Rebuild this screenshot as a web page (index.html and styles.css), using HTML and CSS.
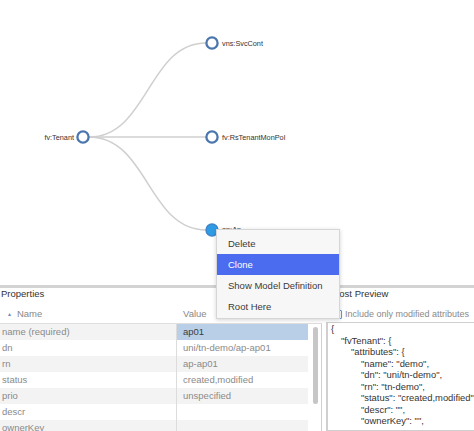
FILE: index.html
```html
<!DOCTYPE html>
<html>
<head>
<meta charset="utf-8">
<link rel="stylesheet" href="styles.css">
</head>
<body>
<div class="graph">
  <svg width="474" height="285" viewBox="0 0 474 285">
    <g class="edges">
      <path d="M89 137 C148 137 148 43 206 43"/>
      <path d="M89 137 L206 137"/>
      <path d="M89 137 C148 137 148 230 206 230"/>
    </g>
    <circle class="node" cx="83" cy="137" r="5.6"/>
    <circle class="node" cx="212" cy="43" r="5.6"/>
    <circle class="node" cx="212" cy="137" r="5.6"/>
    <circle class="node active" cx="212" cy="230" r="6"/>
    <text class="label" x="74" y="139.7" text-anchor="end">fv:Tenant</text>
    <text class="label" x="222" y="45.7">vns:SvcCont</text>
    <text class="label" x="222" y="139.7">fv:RsTenantMonPol</text>
    <text class="label" x="222" y="232.2">ap:Ap</text>
  </svg>
</div>
<div class="splitter"></div>
<div class="panels">
  <div class="props">
    <div class="panel-title">Properties</div>
    <div class="table-head">
      <div class="col-name"><span class="sort">▲</span>Name</div>
      <div class="col-value">Value</div>
    </div>
    <div class="table-body">
      <div class="rows">
        <div class="row"><div class="cell-name">name (required)</div><div class="cell-value selected">ap01</div></div>
        <div class="row"><div class="cell-name">dn</div><div class="cell-value">uni/tn-demo/ap-ap01</div></div>
        <div class="row"><div class="cell-name">rn</div><div class="cell-value">ap-ap01</div></div>
        <div class="row"><div class="cell-name">status</div><div class="cell-value">created,modified</div></div>
        <div class="row"><div class="cell-name">prio</div><div class="cell-value">unspecified</div></div>
        <div class="row"><div class="cell-name">descr</div><div class="cell-value"></div></div>
        <div class="row"><div class="cell-name">ownerKey</div><div class="cell-value"></div></div>
      </div>
      <div class="scrollbar"><div class="thumb"></div></div>
    </div>
  </div>
  <div class="preview">
    <div class="panel-title indent">Post Preview</div>
    <div class="check-row"><span class="checkbox"></span>Include only modified attributes</div>
    <div class="json">
      <div>{</div>
      <div class="i1">"fvTenant": {</div>
      <div class="i2">"attributes": {</div>
      <div class="i3">"name": "demo",</div>
      <div class="i3">"dn": "uni/tn-demo",</div>
      <div class="i3">"rn": "tn-demo",</div>
      <div class="i3">"status": "created,modified"</div>
      <div class="i3">"descr": "",</div>
      <div class="i3">"ownerKey": "",</div>
      <div class="i3">"ownerTag": "",</div>
    </div>
  </div>
</div>
<div class="menu">
  <div class="item">Delete</div>
  <div class="item hover">Clone</div>
  <div class="item">Show Model Definition</div>
  <div class="item">Root Here</div>
</div>
</body>
</html>
```
FILE: styles.css
```css
* { box-sizing: border-box; }
body {
  margin: 0;
  width: 474px;
  height: 431px;
  overflow: hidden;
  position: relative;
  background: #fff;
  font-family: "Liberation Sans", Arial, sans-serif;
}
.graph { height: 285px; }
.graph svg { display: block; }
.edges path { fill: none; stroke: #cfcfcf; stroke-width: 1.5; }
.node { fill: #fff; stroke: #4a76ad; stroke-width: 2.3; }
.node.active { fill: #2f9be5; stroke: #3d85c9; stroke-width: 1.4; }
.label { font-family: "Liberation Sans", Arial, sans-serif; font-size: 7.3px; fill: #333; }

.splitter { height: 3px; background: #d3d3d3; }
.panels { display: flex; height: 143px; }
.props { width: 322px; display: flex; flex-direction: column; }
.panel-title { height: 12px; line-height: 12px; font-size: 9.5px; color: #333; padding-left: 1px; }
.panel-title.indent { padding-left: 7px; }
.table-head {
  display: flex;
  margin-top: 4px;
  height: 20px;
  line-height: 19px;
  border-bottom: 1px solid #dedede;
  font-size: 9.5px;
  color: #888;
}
.col-name { width: 176px; padding-left: 7px; }
.sort { font-size: 5px; color: #6a8cc0; margin-right: 5px; vertical-align: 1px; }
.col-value { padding-left: 7px; }
.table-body { display: flex; flex: 1; border-right: 1px solid #cfcfcf; }
.rows { width: 308px; }
.row { display: flex; height: 16px; line-height: 16px; font-size: 9.5px; color: #8a8a8a; }
.row:nth-child(odd) { background: #f3f3f3; }
.cell-name { width: 176px; padding-left: 2px; }
.cell-value { flex: 1; border-left: 1px solid #dcdcdc; padding-left: 6px; }
.cell-value.selected { background: #b9cfe8; color: #3c3c3c; }
.scrollbar { width: 13px; padding: 3px 0 0 5px; }
.thumb { width: 5px; height: 77px; border-radius: 3px; background: #c6c6c6; }

.preview { flex: 1; margin-left: 4px; display: flex; flex-direction: column; }
.check-row { margin-top: 8px; height: 12px; line-height: 12px; padding-left: 7px; font-size: 9px; color: #8a8a8a; display: flex; align-items: center; }
.checkbox { width: 9px; height: 9px; border: 1px solid #5b9bd8; border-radius: 1px; background: #fff; margin-right: 3px; }
.json {
  margin-top: 2px;
  margin-right: -10px;
  flex: 1;
  border: 1px solid #cfcfcf;
  border-left-width: 2px;
  padding: 0 0 0 3px;
  font-size: 9.4px;
  line-height: 11.5px;
  color: #333;
  white-space: nowrap;
  overflow: hidden;
}
.i1 { padding-left: 10px; }
.i2 { padding-left: 20px; }
.i3 { padding-left: 30px; }

.menu {
  position: absolute;
  left: 216px;
  top: 229px;
  width: 124px;
  padding: 3px 0 1px;
  background: #f7f7f7;
  border: 1px solid #d6d6d6;
  box-shadow: 0 1px 4px rgba(0, 0, 0, 0.18);
}
.item { height: 21px; line-height: 21px; padding-left: 11px; font-size: 9.5px; color: #3a3a3a; white-space: nowrap; }
.item.hover { background: #4c6cf0; color: #fff; }
```
